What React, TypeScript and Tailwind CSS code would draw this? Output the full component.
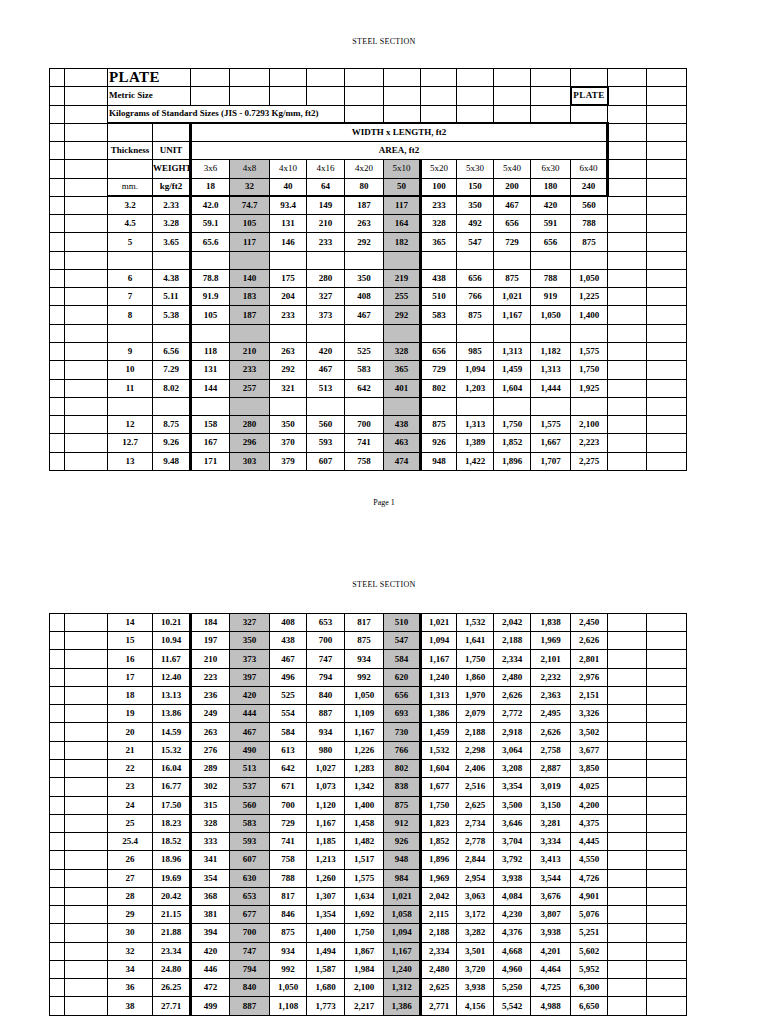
import React from "react";

const sizes = ["3x6", "4x8", "4x10", "4x16", "4x20", "5x10", "5x20", "5x30", "5x40", "6x30", "6x40"];
const areas = ["18", "32", "40", "64", "80", "50", "100", "150", "200", "180", "240"];

// null = blank spacer row
const page1: (string[] | null)[] = [
  ["3.2", "2.33", "42.0", "74.7", "93.4", "149", "187", "117", "233", "350", "467", "420", "560"],
  ["4.5", "3.28", "59.1", "105", "131", "210", "263", "164", "328", "492", "656", "591", "788"],
  ["5", "3.65", "65.6", "117", "146", "233", "292", "182", "365", "547", "729", "656", "875"],
  null,
  ["6", "4.38", "78.8", "140", "175", "280", "350", "219", "438", "656", "875", "788", "1,050"],
  ["7", "5.11", "91.9", "183", "204", "327", "408", "255", "510", "766", "1,021", "919", "1,225"],
  ["8", "5.38", "105", "187", "233", "373", "467", "292", "583", "875", "1,167", "1,050", "1,400"],
  null,
  ["9", "6.56", "118", "210", "263", "420", "525", "328", "656", "985", "1,313", "1,182", "1,575"],
  ["10", "7.29", "131", "233", "292", "467", "583", "365", "729", "1,094", "1,459", "1,313", "1,750"],
  ["11", "8.02", "144", "257", "321", "513", "642", "401", "802", "1,203", "1,604", "1,444", "1,925"],
  null,
  ["12", "8.75", "158", "280", "350", "560", "700", "438", "875", "1,313", "1,750", "1,575", "2,100"],
  ["12.7", "9.26", "167", "296", "370", "593", "741", "463", "926", "1,389", "1,852", "1,667", "2,223"],
  ["13", "9.48", "171", "303", "379", "607", "758", "474", "948", "1,422", "1,896", "1,707", "2,275"],
];

const page2: string[][] = [
  ["14", "10.21", "184", "327", "408", "653", "817", "510", "1,021", "1,532", "2,042", "1,838", "2,450"],
  ["15", "10.94", "197", "350", "438", "700", "875", "547", "1,094", "1,641", "2,188", "1,969", "2,626"],
  ["16", "11.67", "210", "373", "467", "747", "934", "584", "1,167", "1,750", "2,334", "2,101", "2,801"],
  ["17", "12.40", "223", "397", "496", "794", "992", "620", "1,240", "1,860", "2,480", "2,232", "2,976"],
  ["18", "13.13", "236", "420", "525", "840", "1,050", "656", "1,313", "1,970", "2,626", "2,363", "2,151"],
  ["19", "13.86", "249", "444", "554", "887", "1,109", "693", "1,386", "2,079", "2,772", "2,495", "3,326"],
  ["20", "14.59", "263", "467", "584", "934", "1,167", "730", "1,459", "2,188", "2,918", "2,626", "3,502"],
  ["21", "15.32", "276", "490", "613", "980", "1,226", "766", "1,532", "2,298", "3,064", "2,758", "3,677"],
  ["22", "16.04", "289", "513", "642", "1,027", "1,283", "802", "1,604", "2,406", "3,208", "2,887", "3,850"],
  ["23", "16.77", "302", "537", "671", "1,073", "1,342", "838", "1,677", "2,516", "3,354", "3,019", "4,025"],
  ["24", "17.50", "315", "560", "700", "1,120", "1,400", "875", "1,750", "2,625", "3,500", "3,150", "4,200"],
  ["25", "18.23", "328", "583", "729", "1,167", "1,458", "912", "1,823", "2,734", "3,646", "3,281", "4,375"],
  ["25.4", "18.52", "333", "593", "741", "1,185", "1,482", "926", "1,852", "2,778", "3,704", "3,334", "4,445"],
  ["26", "18.96", "341", "607", "758", "1,213", "1,517", "948", "1,896", "2,844", "3,792", "3,413", "4,550"],
  ["27", "19.69", "354", "630", "788", "1,260", "1,575", "984", "1,969", "2,954", "3,938", "3,544", "4,726"],
  ["28", "20.42", "368", "653", "817", "1,307", "1,634", "1,021", "2,042", "3,063", "4,084", "3,676", "4,901"],
  ["29", "21.15", "381", "677", "846", "1,354", "1,692", "1,058", "2,115", "3,172", "4,230", "3,807", "5,076"],
  ["30", "21.88", "394", "700", "875", "1,400", "1,750", "1,094", "2,188", "3,282", "4,376", "3,938", "5,251"],
  ["32", "23.34", "420", "747", "934", "1,494", "1,867", "1,167", "2,334", "3,501", "4,668", "4,201", "5,602"],
  ["34", "24.80", "446", "794", "992", "1,587", "1,984", "1,240", "2,480", "3,720", "4,960", "4,464", "5,952"],
  ["36", "26.25", "472", "840", "1,050", "1,680", "2,100", "1,312", "2,625", "3,938", "5,250", "4,725", "6,300"],
  ["38", "27.71", "499", "887", "1,108", "1,773", "2,217", "1,386", "2,771", "4,156", "5,542", "4,988", "6,650"],
];

const td = "border border-black p-0 text-center align-middle whitespace-nowrap";

const Cols = () => (
  <colgroup>
    <col className="w-[15px]" />
    <col className="w-[43px]" />
    <col className="w-[45px]" />
    <col className="w-[38px]" />
    <col className="w-[39px]" />
    <col className="w-[40px]" />
    <col className="w-[37px]" />
    <col className="w-[38px]" />
    <col className="w-[39px]" />
    <col className="w-[37px]" />
    <col className="w-[36px]" />
    <col className="w-[37px]" />
    <col className="w-[37px]" />
    <col className="w-[40px]" />
    <col className="w-[37px]" />
    <col className="w-[39px]" />
    <col className="w-[40px]" />
  </colgroup>
);

// class for one of the 11 size columns (index 0 = 3x6)
const sizeCell = (i: number) => {
  let c = td;
  if (i === 0) c += " border-l-[3px]";
  if (i === 1 || i === 5) c += " bg-[#c0c0c0]";
  if (i === 5) c += " border-r-[3px]";
  return c;
};

const DataRow = ({ v }: { v: string[] | null }) => (
  <tr className="h-[18.27px]">
    <td className={td} />
    <td className={td} />
    <td className={td}>{v?.[0]}</td>
    <td className={td}>{v?.[1]}</td>
    {sizes.map((_, i) => (
      <td key={i} className={sizeCell(i)}>
        {v?.[i + 2]}
      </td>
    ))}
    <td className={td} />
    <td className={td} />
  </tr>
);

const Title = ({ text, className }: { text: string; className: string }) => (
  <div className={`text-center text-[8px] leading-[8px] tracking-[0.3px] ${className}`}>{text}</div>
);

export default function App() {
  return (
    <div className="w-[768px] h-[1024px] overflow-hidden bg-white text-black font-['Liberation_Serif',serif]">
      <Title text="STEEL SECTION" className="pt-[38px]" />

      <table className="ml-[49px] mt-[22px] w-[637px] table-fixed border-collapse text-[9px] leading-none font-bold">
        <Cols />
        <tbody>
          <tr className="h-[18.27px]">
            <td className={td} />
            <td className={td} />
            <td colSpan={2} className={`${td} text-left pl-px text-[15px] tracking-[0.4px]`}>
              PLATE
            </td>
            {Array.from({ length: 11 }).map((_, i) => (
              <td key={i} className={td} />
            ))}
            <td className={td} />
            <td className={td} />
          </tr>
          <tr className="h-[18.27px]">
            <td className={td} />
            <td className={td} />
            <td colSpan={2} className={`${td} text-left pl-px`}>
              Metric Size
            </td>
            {Array.from({ length: 10 }).map((_, i) => (
              <td key={i} className={td} />
            ))}
            <td className={`${td} border-2 tracking-[0.4px]`}>PLATE</td>
            <td className={td} />
            <td className={td} />
          </tr>
          <tr className="h-[18.27px]">
            <td className={td} />
            <td className={td} />
            <td colSpan={6} className={`${td} text-left pl-px`}>
              Kilograms of Standard Sizes (JIS - 0.7293 Kg/mm, ft2)
            </td>
            {Array.from({ length: 7 }).map((_, i) => (
              <td key={i} className={td} />
            ))}
            <td className={td} />
            <td className={td} />
          </tr>
          <tr className="h-[18.27px]">
            <td className={td} />
            <td className={td} />
            <td className={`${td} border-t-2`} />
            <td className={`${td} border-t-2`} />
            <td colSpan={11} className={`${td} border-t-2 border-l-[3px] border-r-[3px]`}>
              WIDTH x LENGTH, ft2
            </td>
            <td className={td} />
            <td className={td} />
          </tr>
          <tr className="h-[18.27px]">
            <td className={td} />
            <td className={td} />
            <td className={td}>Thickness</td>
            <td className={td}>UNIT</td>
            <td colSpan={11} className={`${td} border-l-[3px] border-r-[3px]`}>
              AREA, ft2
            </td>
            <td className={td} />
            <td className={td} />
          </tr>
          <tr className="h-[18.27px]">
            <td className={td} />
            <td className={td} />
            <td className={td} />
            <td className={`${td} text-left`}>WEIGHT</td>
            {sizes.map((s, i) => (
              <td key={s} className={`${sizeCell(i)} font-normal ${i === 10 ? "border-r-[3px]" : ""}`}>
                {s}
              </td>
            ))}
            <td className={td} />
            <td className={td} />
          </tr>
          <tr className="h-[18.27px]">
            <td className={td} />
            <td className={td} />
            <td className={`${td} border-b-2 font-normal`}>mm.</td>
            <td className={`${td} border-b-2`}>kg/ft2</td>
            {areas.map((a, i) => (
              <td key={i} className={`${sizeCell(i)} border-b-2 ${i === 10 ? "border-r-[3px]" : ""}`}>
                {a}
              </td>
            ))}
            <td className={td} />
            <td className={td} />
          </tr>
          {page1.map((v, i) => (
            <DataRow key={i} v={v} />
          ))}
        </tbody>
      </table>

      <Title text="Page 1" className="mt-[28px] tracking-normal" />
      <Title text="STEEL SECTION" className="mt-[74px]" />

      <table className="ml-[49px] mt-[24px] w-[637px] table-fixed border-collapse text-[9px] leading-none font-bold">
        <Cols />
        <tbody>
          {page2.map((v, i) => (
            <DataRow key={i} v={v} />
          ))}
        </tbody>
      </table>
    </div>
  );
}
